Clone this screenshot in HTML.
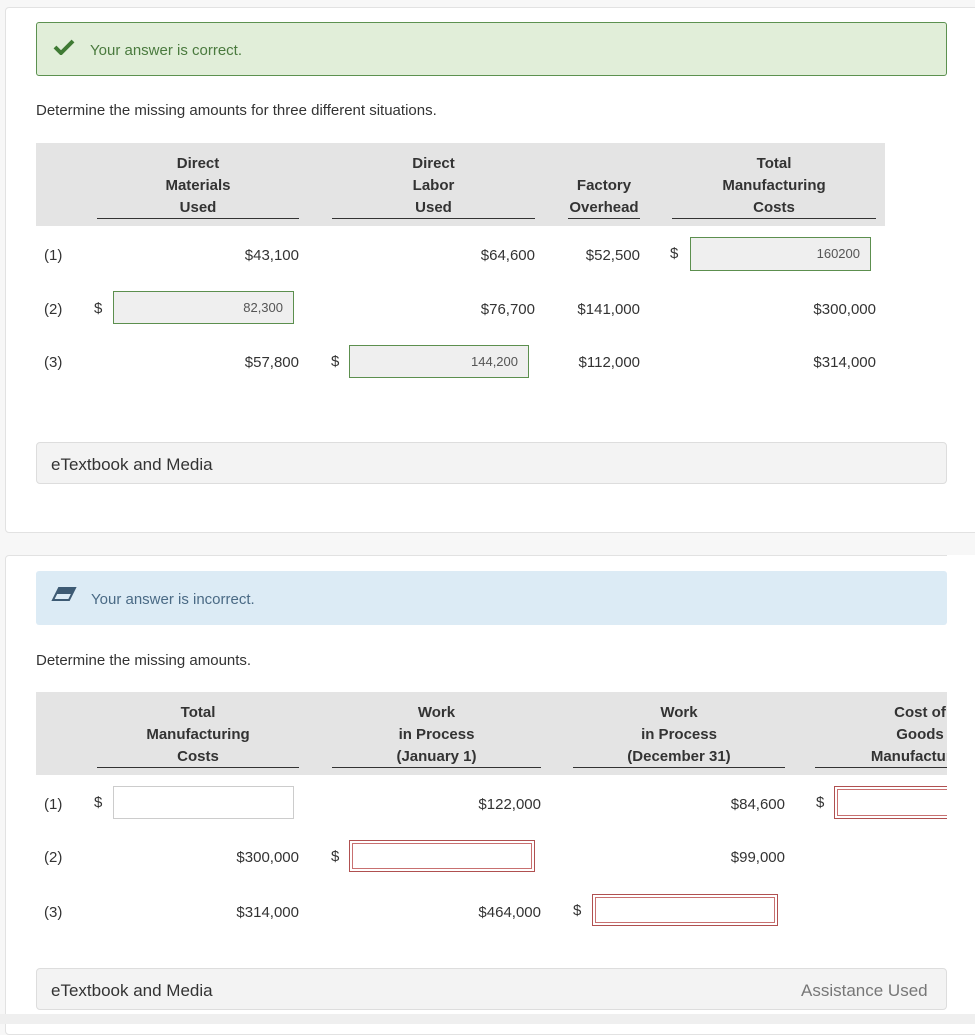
<!DOCTYPE html><html><head><style>
body{margin:0;width:975px;height:1024px;overflow:hidden;background:#f7f7f7;font-family:"Liberation Sans",sans-serif;color:#333;position:relative}
div,span{position:absolute;box-sizing:border-box}
.card{background:#fff;border:1px solid #e2e2e2;border-radius:4px}
.t{font-size:15px;white-space:nowrap;margin-top:2px}
.r{text-align:right}
.c{text-align:center;font-weight:bold;font-size:15px;line-height:22px;color:#333;margin-top:1px}
.hd{background:#e4e4e4}
.ul{height:1px;background:#333}
.in{border:1px solid #999;background:#fff;font-size:13px;color:#555;text-align:right;padding:8px 10px 0 0}
.ok{background:#efefef;border:1px solid #5c8f4e}
.bad{border:1px solid #b05050;box-shadow:inset 0 0 0 2px #fff,inset 0 0 0 3px #c87070}
.bar{background:#f3f3f3;border:1px solid #ddd;border-radius:4px}
</style></head><body>
<div class="card" style="left:5px;top:7px;width:975px;height:526px"></div>
<div style="left:36px;top:22px;width:911px;height:54px;background:#e1eed9;border:1px solid #5c9150;border-radius:3px"></div>
<svg style="position:absolute;left:53px;top:39px" width="22" height="16"><path d="M2 8 L8 14 L20 2" stroke="#3f7a34" stroke-width="4" fill="none"/></svg>
<div class="t" style="left:90px;top:40px;color:#4a7a3e">Your answer is correct.</div>
<div class="t" style="left:36px;top:100px">Determine the missing amounts for three different situations.</div>
<div class="hd" style="left:36px;top:143px;width:849px;height:83px"></div>
<div class="c" style="left:97px;top:152px;width:202px">Direct<br>Materials<br>Used</div>
<div class="c" style="left:332px;top:152px;width:203px">Direct<br>Labor<br>Used</div>
<div class="c" style="left:568px;top:174px;width:72px">Factory<br>Overhead</div>
<div class="c" style="left:672px;top:152px;width:204px">Total<br>Manufacturing<br>Costs</div>
<div class="ul" style="left:97px;top:218px;width:202px"></div>
<div class="ul" style="left:332px;top:218px;width:203px"></div>
<div class="ul" style="left:568px;top:218px;width:72px"></div>
<div class="ul" style="left:672px;top:218px;width:204px"></div>
<div class="t" style="left:44px;top:245px">(1)</div>
<div class="t" style="left:44px;top:299px">(2)</div>
<div class="t" style="left:44px;top:352px">(3)</div>
<div class="t r" style="left:199px;top:245px;width:100px">$43,100</div>
<div class="t r" style="left:435px;top:245px;width:100px">$64,600</div>
<div class="t r" style="left:540px;top:245px;width:100px">$52,500</div>
<div class="t" style="left:670px;top:243px">$</div>
<div class="in ok" style="left:690px;top:237px;width:181px;height:34px">160200</div>
<div class="t" style="left:94px;top:298px">$</div>
<div class="in ok" style="left:113px;top:291px;width:181px;height:33px">82,300</div>
<div class="t r" style="left:435px;top:299px;width:100px">$76,700</div>
<div class="t r" style="left:540px;top:299px;width:100px">$141,000</div>
<div class="t r" style="left:776px;top:299px;width:100px">$300,000</div>
<div class="t r" style="left:199px;top:352px;width:100px">$57,800</div>
<div class="t" style="left:331px;top:351px">$</div>
<div class="in ok" style="left:349px;top:345px;width:180px;height:33px">144,200</div>
<div class="t r" style="left:540px;top:352px;width:100px">$112,000</div>
<div class="t r" style="left:776px;top:352px;width:100px">$314,000</div>
<div class="bar" style="left:36px;top:442px;width:911px;height:42px"></div>
<div class="t" style="left:51px;top:453px;font-size:17px">eTextbook and Media</div>

<div class="card" style="left:5px;top:555px;width:975px;height:480px"></div>
<div style="left:36px;top:571px;width:911px;height:54px;background:#dcebf5;border-radius:3px"></div>
<svg style="position:absolute;left:51px;top:586px" width="26" height="18"><path d="M8 2 L24 2 L18 14 L2 14 Z" fill="none" stroke="#3d5a73" stroke-width="2"/><path d="M8 2 L24 2 L21 8 L5 8 Z" fill="#3d5a73"/></svg>
<div class="t" style="left:91px;top:589px;color:#4a6a85">Your answer is incorrect.</div>
<div class="t" style="left:36px;top:650px">Determine the missing amounts.</div>
<div class="hd" style="left:36px;top:692px;width:911px;height:83px"></div>
<div class="c" style="left:97px;top:701px;width:202px">Total<br>Manufacturing<br>Costs</div>
<div class="c" style="left:332px;top:701px;width:209px">Work<br>in Process<br>(January 1)</div>
<div class="c" style="left:573px;top:701px;width:212px">Work<br>in Process<br>(December 31)</div>
<div style="left:815px;top:692px;width:132px;height:80px;overflow:hidden"><div class="c" style="left:25px;top:9px;width:160px">Cost of<br>Goods<br>Manufactured</div></div>
<div class="ul" style="left:97px;top:767px;width:202px"></div>
<div class="ul" style="left:332px;top:767px;width:209px"></div>
<div class="ul" style="left:573px;top:767px;width:212px"></div>
<div class="ul" style="left:815px;top:767px;width:132px"></div>
<div class="t" style="left:44px;top:794px">(1)</div>
<div class="t" style="left:44px;top:847px">(2)</div>
<div class="t" style="left:44px;top:902px">(3)</div>
<div class="t" style="left:94px;top:792px">$</div>
<div class="in" style="left:113px;top:786px;width:181px;height:33px;border-color:#ccc"></div>
<div class="t r" style="left:441px;top:794px;width:100px">$122,000</div>
<div class="t r" style="left:685px;top:794px;width:100px">$84,600</div>
<div class="t" style="left:816px;top:792px">$</div>
<div class="in bad" style="left:834px;top:786px;width:130px;height:33px"></div>
<div class="t r" style="left:199px;top:847px;width:100px">$300,000</div>
<div class="t" style="left:331px;top:846px">$</div>
<div class="in bad" style="left:349px;top:840px;width:186px;height:32px"></div>
<div class="t r" style="left:685px;top:847px;width:100px">$99,000</div>
<div class="t r" style="left:199px;top:902px;width:100px">$314,000</div>
<div class="t r" style="left:441px;top:902px;width:100px">$464,000</div>
<div class="t" style="left:573px;top:900px">$</div>
<div class="in bad" style="left:592px;top:894px;width:186px;height:32px"></div>
<div style="left:947px;top:555px;width:28px;height:469px;background:#fff"></div>
<div class="bar" style="left:36px;top:968px;width:911px;height:42px"></div>
<div class="t" style="left:51px;top:979px;font-size:17px">eTextbook and Media</div>
<div class="t" style="left:801px;top:979px;font-size:17px;color:#777">Assistance Used</div>
<div style="left:0;top:1014px;width:975px;height:10px;background:#efefef"></div>
</body></html>
